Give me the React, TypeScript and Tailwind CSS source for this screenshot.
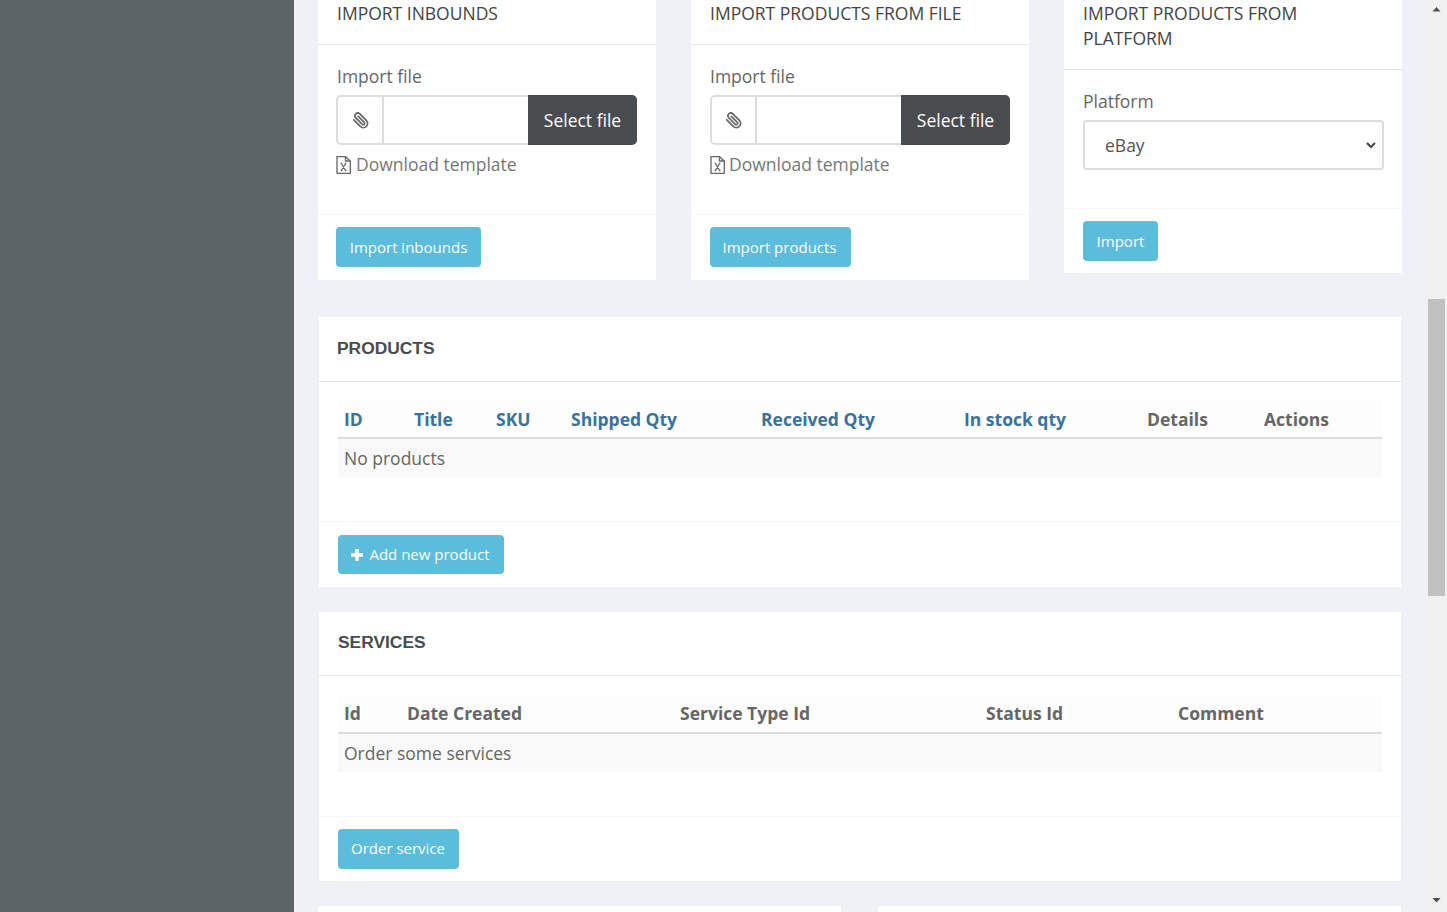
import React from "react";
import { FiPaperclip } from "react-icons/fi";

const font = "font-['Open_Sans',sans-serif]";

function ExcelIcon() {
  return (
    <svg className="w-[15px] h-[18px] shrink-0" viewBox="0 0 15 18" fill="none" stroke="#666" strokeWidth="1.3">
      <path d="M1 .7h8.5L14.3 5v12.3H1z" />
      <path d="M9.5 .7V5h4.8" />
      <path d="M4.6 7.5h1.6M8.8 7.5h1.6M4.6 14.5h1.6M8.8 14.5h1.6M5.4 7.5l4.2 7M9.6 7.5l-4.2 7" />
    </svg>
  );
}

function FileCard({ title, button, btnW, inputW, addonW, px, labelPl, gap, btnPr }: { title: string; button: string; btnW: string; inputW: string; addonW: string; px: string; labelPl: string; gap: string; btnPr: string }) {
  return (
    <div className="w-[338px] h-[280px] bg-white flex flex-col">
      <div className="h-[45px] border-b border-[#e5e5e5] px-[19px] text-[17.5px] leading-[25px] text-[#444] pt-px">{title}</div>
      <div className={`h-[170px] ${px} pt-[19px] border-b border-[#f7f7f7]`}>
        <div className={`${labelPl} text-[17.5px] leading-[25px] text-[#666]`}>Import file</div>
        <div className={`mt-[6px] flex h-[50px] ${inputW}`}>
          <div className={`${addonW} flex items-center justify-center border-2 border-[#ddd] rounded-l-[5px] text-[#666]`}>
            <FiPaperclip className="w-[17px] h-[17px] -scale-x-100" strokeWidth={2.4} />
          </div>
          <div className="flex-1 border-y-2 border-[#ddd]"></div>
          <div className="w-[109px] bg-[#484c4f] text-white rounded-r-[5px] flex items-center justify-center text-[17.5px]">Select file</div>
        </div>
        <div className={`mt-[7px] flex items-center ${gap} text-[17.5px] leading-[25px] text-[#777]`}>
          <ExcelIcon />
          <span>Download template</span>
        </div>
      </div>
      <div className={`${px} pt-[12px]`}>
        <div className={`${btnW} ${btnPr} h-[40px] bg-[#5bbcdc] text-white rounded-[4px] flex items-center justify-center text-[15px] font-medium`}>{button}</div>
      </div>
    </div>
  );
}

function Panel({ title, h, headH, px, children }: { title: string; h: string; headH: string; px: string; children: React.ReactNode }) {
  return (
    <div className={`mx-[1px] ${h} bg-white flex flex-col`}>
      <div className={`${headH} border-b border-[#e5e5e5] ${px} pb-[2px] flex items-center font-['Liberation_Sans',sans-serif] font-bold text-[17.4px] text-[#484c4f]`}>{title}</div>
      {children}
    </div>
  );
}

export default function App() {
  return (
    <div className={`${font} flex h-[912px] w-[1447px] overflow-hidden bg-[#eff1f7]`}>
      <div className="w-[294px] shrink-0 bg-[#5b6567]"></div>
      <div className="w-[1130px] shrink-0 pl-[24px] pr-[22px]">
        <div className="flex gap-[35px]">
          <FileCard title="IMPORT INBOUNDS" button="Import inbounds" btnW="w-[145px]" inputW="w-[301px]" addonW="w-[48px]" px="px-[18px]" labelPl="pl-px" gap="gap-[5px]" btnPr="" />
          <FileCard title="IMPORT PRODUCTS FROM FILE" button="Import products" btnW="w-[141px]" inputW="w-[300px]" addonW="w-[47px]" px="px-[19px]" labelPl="" gap="gap-[4px]" btnPr="pr-[2px]" />
          <div className="w-[338px] h-[273px] bg-white flex flex-col">
            <div className="h-[70px] border-b border-[#e5e5e5] px-[19px] text-[17.5px] leading-[25px] text-[#444] pt-px">
              IMPORT PRODUCTS FROM<br />PLATFORM
            </div>
            <div className="h-[139px] px-[19px] pt-[19px] border-b border-[#f7f7f7]">
              <div className="text-[17.5px] leading-[25px] text-[#666]">Platform</div>
              <div className="relative mt-[6px] h-[50px] w-[301px] border-2 border-[#ddd] rounded-[4px] flex items-center pl-[20px] text-[17.5px] text-[#555]">
                eBay
                <svg className="absolute right-[5px] top-[17px] w-[12px] h-[12px]" viewBox="0 0 12 12" fill="none" stroke="#444" strokeWidth="2"><path d="M2 4l4 4 4-4" /></svg>
              </div>
            </div>
            <div className="px-[19px] pt-[12px]">
              <div className="w-[75px] h-[40px] bg-[#5bbcdc] text-white rounded-[4px] flex items-center justify-center text-[15px] font-medium">Import</div>
            </div>
          </div>
        </div>

        <div className="mt-[37px]">
          <Panel title="PRODUCTS" h="h-[270px]" headH="h-[65px]" px="px-[18px]">
            <div className="h-[140px] px-[19px] pt-[18px] border-b border-[#f7f7f7]">
              <div className="relative h-[39px] border-b-2 border-[#ddd] bg-[#fdfdfd] text-[17.5px] font-bold text-[#3a729f]">
                <span className="absolute left-[6px] top-[6px]">ID</span>
                <span className="absolute left-[76px] top-[6px]">Title</span>
                <span className="absolute left-[158px] top-[6px]">SKU</span>
                <span className="absolute left-[233px] top-[6px]">Shipped Qty</span>
                <span className="absolute left-[423px] top-[6px]">Received Qty</span>
                <span className="absolute left-[626px] top-[6px]">In stock qty</span>
                <span className="absolute left-[809px] top-[6px] text-[#666]">Details</span>
                <span className="absolute left-[926px] top-[6px] text-[#666]">Actions</span>
              </div>
              <div className="h-[38px] bg-[#f9f9f9] px-[6px] flex items-center text-[17.5px] text-[#666]">No products</div>
            </div>
            <div className="px-[19px] pt-[13px]">
              <div className="w-[166px] h-[39px] bg-[#5bbcdc] text-white rounded-[4px] flex items-center justify-center gap-[6px] pr-px text-[15px] font-medium">
                <svg className="w-[12px] h-[12px]" viewBox="0 0 12 12" stroke="#fff" strokeWidth="3.6"><path d="M6 0v12M0 6h12" /></svg>
                Add new product
              </div>
            </div>
          </Panel>
        </div>

        <div className="mt-[25px]">
          <Panel title="SERVICES" h="h-[269px]" headH="h-[64px]" px="px-[19px]">
            <div className="h-[141px] px-[19px] pt-[20px] border-b border-[#f7f7f7]">
              <div className="relative h-[38px] border-b-2 border-[#ddd] bg-[#fdfdfd] text-[17.5px] font-bold text-[#666]">
                <span className="absolute left-[6px] top-[4px]">Id</span>
                <span className="absolute left-[69px] top-[4px]">Date Created</span>
                <span className="absolute left-[342px] top-[4px]">Service Type Id</span>
                <span className="absolute left-[648px] top-[4px]">Status Id</span>
                <span className="absolute left-[840px] top-[4px]">Comment</span>
              </div>
              <div className="h-[38px] bg-[#f9f9f9] px-[6px] flex items-center text-[17.5px] text-[#666]">Order some services</div>
            </div>
            <div className="px-[19px] pt-[12px]">
              <div className="w-[121px] h-[40px] pb-[2px] pr-px bg-[#5bbcdc] text-white rounded-[4px] flex items-center justify-center text-[15px] font-medium">Order service</div>
            </div>
          </Panel>
        </div>

        <div className="mt-[25px] flex gap-[37px]">
          <div className="w-[523px] h-[40px] bg-white"></div>
          <div className="w-[523px] h-[40px] bg-white"></div>
        </div>
      </div>
      <div className="w-[23px] shrink-0 bg-[#f1f1f1] pl-[4px] pr-[2px] flex flex-col">
        <svg className="h-[17px] w-full" viewBox="0 0 17 17"><path d="M4.5 11.5L8.5 7l4 4.5z" fill="#505050" /></svg>
        <div className="mt-[282px] h-[297px] bg-[#c1c1c1]"></div>
        <div className="flex-1"></div>
        <svg className="h-[17px] w-full mb-[3px]" viewBox="0 0 17 17"><path d="M4.5 6L8.5 10.5l4-4.5z" fill="#505050" /></svg>
      </div>
    </div>
  );
}
